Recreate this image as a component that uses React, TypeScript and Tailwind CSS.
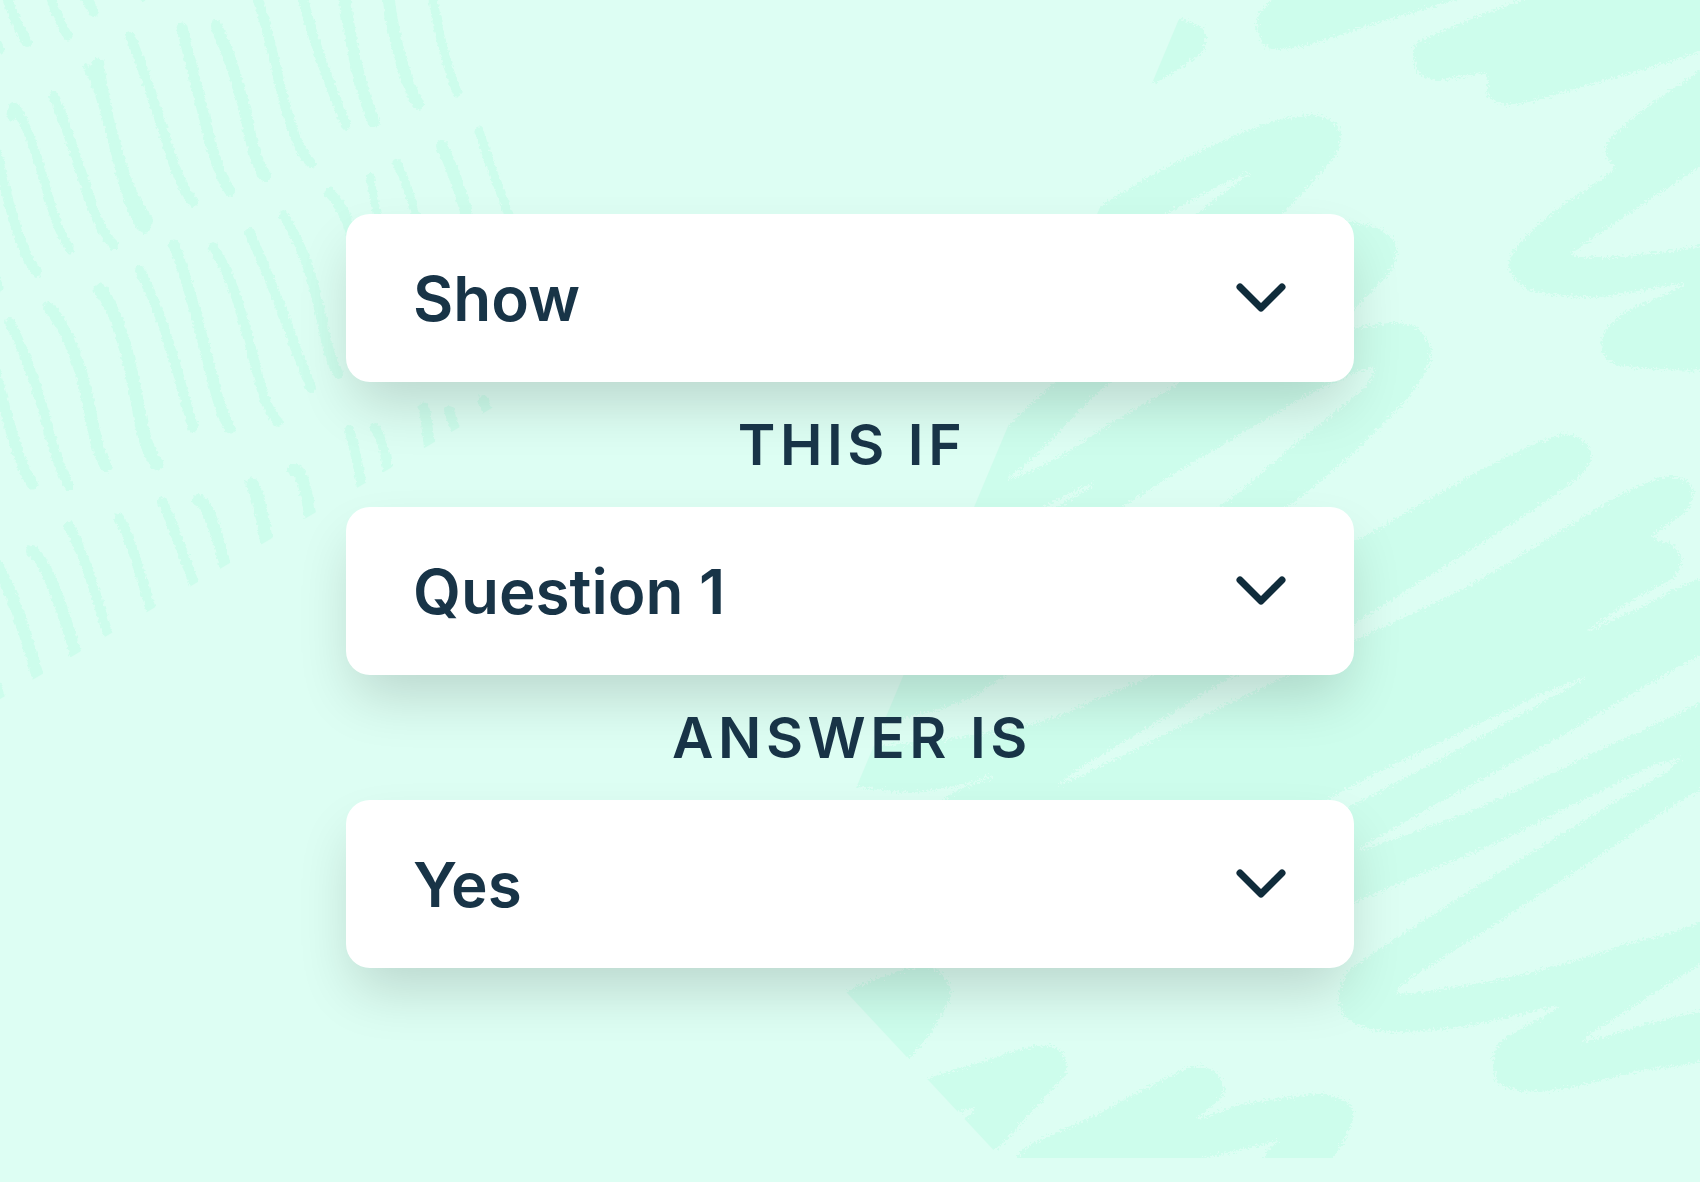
import { Fragment, useState } from "react";

type Point = [number, number];

const rules = [
  { id: "action", value: "Show", after: "THIS IF" },
  { id: "question", value: "Question 1", after: "ANSWER IS" },
  { id: "answer", value: "Yes", after: "" },
];

// short pen strokes, top left corner: [width, path]
const dashes: [number, string][] = [
  [9, "M-6 38L0 50"],
  [10, "M6 -6Q15 22 27 42"],
  [9, "M49 -6Q58 20 68 36"],
  [10, "M84 -6L94 12"],
  [8, "M139 -6L142 -3"],
  [10, "M256 -6C267 25 274 60 280 85C287 115 298 152 311 163"],
  [10, "M302 -6C312 40 332 90 346 125"],
  [12, "M344 -6C350 40 358 85 374 122"],
  [12, "M388 -6C393 35 404 80 418 104"],
  [9, "M432 -6C438 30 446 65 457 92"],
  [10, "M-3 155C8 200 20 253 37 272"],
  [9, "M11 117Q12 104 15 107C28 125 40 165 48 195Q58 232 70 249"],
  [10, "M54 96C66 125 78 162 87 190Q98 230 114 245"],
  [10, "M130 36C144 70 160 120 169 150Q180 185 193 202"],
  [11, "M182 28C190 60 201 105 210 140Q219 175 230 191"],
  [12, "M216 26C230 55 240 90 247 120Q254 160 265 176"],
  [11, "M330 193Q343 205 353 238"],
  [8, "M370 177L378 220"],
  [9, "M397 163Q408 185 417 220"],
  [12, "M442 146Q456 175 468 220"],
  [9, "M479 131Q492 172 511 220"],
  [9, "M-4 278L-1 288"],
  [10, "M10 323C30 360 45 415 53 445Q60 470 69 486"],
  [11, "M-6 370C5 405 15 456 32 484"],
  [12, "M49 308C73 335 84 380 91 415Q97 452 106 466"],
  [13, "M100 290C120 312 131 370 138 405Q144 448 157 464"],
  [10, "M140 270C160 310 175 360 184 396L193 427"],
  [11, "M174 245C190 285 204 345 213 380Q220 412 230 428"],
  [10, "M213 247C236 280 248 340 258 375Q266 410 278 422"],
  [10, "M250 233C268 275 288 325 296 350L311 388"],
  [10, "M284 216C308 255 315 290 323 325Q329 358 338 373"],
  [10, "M-4 685L4 710"],
  [12, "M-3 565C13 592 27 640 42 690"],
  [12, "M32 551C50 565 67 622 80 670"],
  [10, "M69 526C85 555 98 603 113 650"],
  [10, "M119 518C133 540 143 590 158 630"],
  [10, "M163 502Q180 545 202 605"],
  [12, "M198 500Q213 505 230 590"],
  [13, "M252 484Q261 498 270 565"],
  [12, "M293 470Q306 468 313 540"],
  [10, "M349 430Q357 455 365 505"],
  [10, "M375 428Q386 442 391 495"],
  [11, "M424 408Q428 428 431 465"],
  [10, "M449 411L462 450"],
  [10, "M483 400L494 430"],
];

const brush: Point[][] = [
  [[1184, 20], [1203, 29], [1206, 42], [1200, 54], [1150, 84], [1130, 60], [1165, 20]],
  [[1290, -10], [1262, 10], [1257, 22], [1261, 40], [1272, 49], [1307, 45], [1364, 27], [1470, -10]],
  [[1560, -10], [1418, 42], [1414, 54], [1418, 72], [1436, 80], [1484, 73], [1488, 80], [1489, 97], [1513, 105], [1578, 88], [1720, 42], [1720, -10]],
  [[1720, 58], [1695, 74], [1643, 110], [1609, 140], [1606, 155], [1613, 170], [1552, 213], [1514, 250], [1510, 270], [1530, 290], [1597, 297], [1684, 284], [1624, 313], [1603, 335], [1603, 353], [1615, 364], [1647, 368], [1720, 356]],
  [[1060, 245], [1100, 207], [1177, 162], [1268, 123], [1314, 115], [1335, 124], [1341, 140], [1328, 165], [1240, 240]],
  [[1320, 228], [1372, 226], [1393, 239], [1397, 252], [1386, 277], [1320, 330]],
  [
    [1075, 370], [1040, 396], [1010, 424], [940, 480], [860, 620], [790, 780], [858, 787], [911, 792],
    [960, 785], [993, 776], [940, 805], [940, 880], [1320, 918], [1357, 901], [1450, 862], [1500, 841],
    [1583, 800], [1650, 767], [1720, 735], [1720, 582], [1633, 611], [1587, 632], [1633, 600], [1674, 577],
    [1681, 560], [1672, 545], [1653, 536], [1686, 511], [1693, 493], [1685, 480], [1663, 477], [1617, 497],
    [1567, 527], [1467, 587], [1355, 640], [1310, 660], [1310, 648], [1355, 623], [1450, 563], [1533, 510],
    [1583, 473], [1591, 455], [1582, 440], [1560, 435], [1500, 460], [1433, 497], [1355, 541], [1260, 575],
    [1260, 528], [1300, 498], [1353, 453], [1406, 400], [1428, 366], [1430, 346], [1417, 328], [1395, 323],
    [1354, 328], [1260, 345],
  ],
  [
    [1720, 743], [1660, 776], [1600, 811], [1503, 870], [1437, 912], [1383, 947], [1348, 972], [1339, 995],
    [1345, 1017], [1366, 1028], [1400, 1032], [1467, 1026], [1558, 1006], [1543, 1017], [1503, 1040],
    [1493, 1060], [1499, 1083], [1523, 1091], [1567, 1088], [1633, 1072], [1720, 1042],
  ],
  [[838, 1000], [903, 970], [930, 967], [947, 980], [950, 997], [934, 1027], [906, 1059], [870, 1050]],
  [[918, 1086], [972, 1065], [1030, 1047], [1054, 1047], [1064, 1057], [1066, 1073], [1030, 1113], [991, 1150], [940, 1130]],
  [
    [1024, 1162], [1106, 1110], [1190, 1067], [1214, 1071], [1224, 1088], [1219, 1100], [1198, 1119],
    [1240, 1105], [1317, 1094], [1342, 1099], [1353, 1112], [1348, 1132], [1322, 1164],
  ],
];

// paper showing through between the brush strokes
const gaps: Point[][] = [
  [[1720, 150], [1700, 166], [1573, 253], [1600, 257], [1636, 255], [1720, 235]],
  [[1155, 222], [1211, 190], [1250, 173], [1215, 199], [1185, 222]],
  [[1118, 378], [1054, 437], [1033, 458], [1008, 480], [1061, 456], [1111, 423], [1184, 378]],
  [[1375, 368], [1354, 373], [1295, 402], [1110, 518], [1200, 518], [1300, 440], [1364, 388]],
  [[1094, 484], [1070, 493], [1036, 512], [1048, 512], [1072, 498]],
  [[1020, 670], [976, 695], [936, 710], [870, 728], [870, 745], [947, 739], [1040, 722], [1090, 702], [1158, 668]],
  [[1250, 668], [1161, 720], [1090, 762], [1060, 784], [1108, 763], [1179, 727], [1300, 668]],
  [[1585, 678], [1533, 698], [1460, 733], [1363, 780], [1310, 812], [1338, 812], [1457, 750], [1500, 726]],
  [[1720, 648], [1633, 693], [1567, 733], [1467, 787], [1400, 825], [1360, 850], [1433, 825], [1483, 806], [1600, 750], [1720, 690]],
  [[1720, 785], [1583, 867], [1483, 932], [1397, 990], [1450, 988], [1533, 972], [1617, 947], [1720, 907]],
  [[1720, 956], [1633, 1007], [1582, 1042], [1650, 1023], [1720, 1002]],
  [[950, 1114], [976, 1108], [966, 1117], [950, 1124]],
  [[1196, 1162], [1240, 1150], [1278, 1141], [1268, 1150], [1258, 1166]],
];

function toPath(points: Point[]) {
  const n = points.length;
  let d = `M${points[0][0]} ${points[0][1]}`;
  for (let i = 0; i < n; i++) {
    const before = points[(i + n - 1) % n];
    const from = points[i];
    const to = points[(i + 1) % n];
    const next = points[(i + 2) % n];
    // handles never longer than a third of the segment
    const length = Math.hypot(to[0] - from[0], to[1] - from[1]);
    const handle = (a: Point, b: Point) => {
      const span = Math.hypot(b[0] - a[0], b[1] - a[1]) || 1;
      const k = Math.min(span / 7, length / 3) / span;
      return [(b[0] - a[0]) * k, (b[1] - a[1]) * k];
    };
    const h1 = handle(before, to);
    const h2 = handle(from, next);
    d += `C${from[0] + h1[0]} ${from[1] + h1[1]} ${to[0] - h2[0]} ${to[1] - h2[1]} ${to[0]} ${to[1]}`;
  }
  return d + "Z";
}

function Background() {
  return (
    <svg
      className="absolute inset-0 h-full w-full"
      viewBox="0 0 1700 1182"
      preserveAspectRatio="xMidYMid slice"
      aria-hidden="true"
    >
      <defs>
        <filter id="rough" x="0" y="0" width="1700" height="1182" filterUnits="userSpaceOnUse" colorInterpolationFilters="sRGB">
          <feTurbulence type="fractalNoise" baseFrequency="0.45" numOctaves="2" seed="4" />
          <feDisplacementMap in="SourceGraphic" scale="12" xChannelSelector="R" yChannelSelector="G" />
        </filter>
        <filter id="soft" x="0" y="0" width="1700" height="1182" filterUnits="userSpaceOnUse" colorInterpolationFilters="sRGB">
          <feTurbulence type="fractalNoise" baseFrequency="0.3" numOctaves="2" seed="9" />
          <feDisplacementMap in="SourceGraphic" scale="5" xChannelSelector="R" yChannelSelector="G" />
        </filter>
        <clipPath id="left-cut">
          <path d="M0 0H700V285L0 699Z" />
        </clipPath>
        <clipPath id="right-cut">
          <path d="M1187 0H1700V1158H1001L794 936Z" />
        </clipPath>
      </defs>

      <g clipPath="url(#left-cut)">
        <g filter="url(#soft)" fill="none" stroke="#cdfdec" strokeLinecap="round" strokeLinejoin="round">
          {dashes.map(([width, d]) => (
            <path key={d} d={d} strokeWidth={width} />
          ))}
          <path
            d="M85 66L91 69L96 60L102 62C105 85 109 110 116 134C125 172 136 200 151 219Q150 231 144 231Q138 228 133 218C120 190 114 155 106 125Q97 90 85 66Z"
            fill="#cdfdec"
            strokeWidth={4}
          />
        </g>
      </g>

      <g clipPath="url(#right-cut)">
        <g filter="url(#rough)">
          {brush.map((points, i) => (
            <path key={i} d={toPath(points)} fill="#cdfdec" />
          ))}
          {gaps.map((points, i) => (
            <path key={i} d={toPath(points)} fill="#ddfef3" />
          ))}
        </g>
      </g>
    </svg>
  );
}

function RuleSelect({ id, value }: { id: string; value: string }) {
  const [selected, setSelected] = useState(value);

  return (
    <div className="relative rounded-3xl bg-white shadow-[0_28px_56px_-8px_rgba(0,0,0,0.16)]">
      <select
        id={id}
        aria-label={id}
        value={selected}
        onChange={(e) => setSelected(e.target.value)}
        className="block h-[168px] w-full cursor-pointer appearance-none rounded-3xl bg-transparent pr-40 pl-[67px] text-[62px] font-semibold text-[#183447]"
      >
        <option>{value}</option>
      </select>
      <svg
        className="pointer-events-none absolute inset-y-0 right-[68px] my-auto h-[30px] w-[50px]"
        viewBox="0 0 50 30"
        fill="none"
        stroke="#102c3b"
        strokeWidth="7"
        strokeLinecap="round"
        strokeLinejoin="round"
        aria-hidden="true"
      >
        <path d="M4 4L25 25L46 4" />
      </svg>
    </div>
  );
}

export default function App() {
  return (
    <main className="relative flex min-h-screen items-center justify-center overflow-hidden bg-[#ddfef3] px-6 font-['Inter',sans-serif]">
      <Background />

      <div className="relative w-full max-w-[1008px]">
        {rules.map((rule) => (
          <Fragment key={rule.id}>
            <RuleSelect id={rule.id} value={rule.value} />
            {rule.after && (
              <p className="relative flex h-[125px] items-center justify-center pl-1 text-[57px] font-semibold tracking-[0.08em] text-[#183447]">
                {rule.after}
              </p>
            )}
          </Fragment>
        ))}
      </div>
    </main>
  );
}
